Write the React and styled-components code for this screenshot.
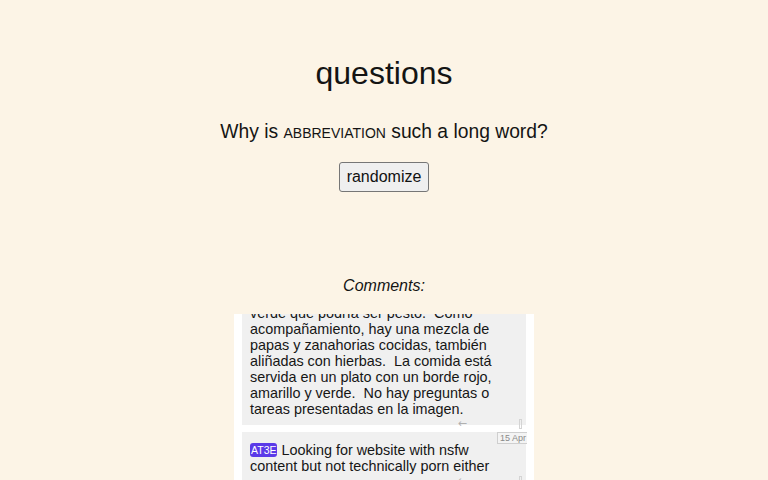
import React, { useLayoutEffect, useRef } from 'react';
import styled, { createGlobalStyle } from 'styled-components';

const GlobalStyle = createGlobalStyle`
  html, body {
    margin: 0;
    padding: 0;
    background: #fcf4e6;
    overflow: hidden;
  }
  * {
    box-sizing: border-box;
  }
  body {
    font-family: 'Liberation Sans', Arial, sans-serif;
    color: #141414;
  }
`;

const Page = styled.div`
  display: flex;
  flex-direction: column;
  align-items: center;
  padding-top: 55px;
  height: 480px;
`;

const Title = styled.h1`
  margin: 0;
  font-size: 32px;
  line-height: 37px;
  font-weight: normal;
`;

const Question = styled.h2`
  margin: 29px 0 0;
  font-size: 19.3px;
  line-height: 22px;
  font-weight: normal;
`;

const Abbr = styled.span`
  font-variant: small-caps;
  text-transform: lowercase;
`;

const RandomButton = styled.button`
  margin-top: 19px;
  height: 30px;
  padding: 0 7px;
  font-family: 'Liberation Sans', Arial, sans-serif;
  font-size: 16px;
  color: #111;
  background: #efefef;
  border: 1px solid #767676;
  border-radius: 3px;
`;

const CommentsLabel = styled.h3`
  margin: 85px 0 0;
  font-size: 16px;
  line-height: 18.5px;
  font-weight: normal;
  font-style: italic;
`;

const Panel = styled.div`
  margin-top: 18px;
  width: 300px;
  flex: 1;
  display: flex;
  flex-direction: column;
  gap: 7px;
  background: #fff;
  padding: 8px 8px 0;
  overflow-y: scroll;
  scrollbar-width: none;
  &::-webkit-scrollbar {
    display: none;
  }
`;

const Card = styled.div`
  position: relative;
  flex-shrink: 0;
  background: #f0f0f0;
  padding: ${p => (p.dated ? '10px' : '8px')} 8px 0;
`;

const Body = styled.div`
  font-size: 14.4px;
  line-height: 16px;
  white-space: pre-wrap;
  color: #161616;
`;

const Badge = styled.span`
  display: inline-block;
  background: #5a3ae8;
  color: #fff;
  font-size: 10.5px;
  line-height: 14px;
  padding: 0 1px;
  border-radius: 3px;
  vertical-align: 1px;
`;

const DateTag = styled.span`
  position: absolute;
  top: 0;
  right: -1px;
  font-size: 9px;
  line-height: 10px;
  padding: 0 1px 0 2px;
  color: #8a8a8a;
  border: 1px solid #cfcfcf;
  border-right: none;
  background: #f4f4f4;
`;

const Footer = styled.div`
  display: flex;
  justify-content: flex-end;
  align-items: flex-end;
  gap: 52px;
  height: 8px;
  margin-right: -4px;
  color: #b0b0b0;
`;

const Reply = styled.span`
  font-family: 'DejaVu Sans', sans-serif;
  font-size: 11px;
  line-height: 8px;
  margin-bottom: -3px;
`;

const Tick = styled.span`
  width: 3px;
  height: 10px;
  border: 1px solid #d4d4d4;
  margin-bottom: -4px;
`;

export default function App() {
  const panelRef = useRef(null);
  const markRef = useRef(null);

  useLayoutEffect(() => {
    const panel = panelRef.current;
    const mark = markRef.current;
    if (!panel || !mark) return;
    const diff = mark.getBoundingClientRect().top - panel.getBoundingClientRect().top;
    panel.scrollTop = panel.scrollTop + diff + 9;
  }, []);

  return (
    <>
      <GlobalStyle />
      <Page>
        <Title>questions</Title>
        <Question>
          Why is <Abbr>ABBREVIATION</Abbr> such a long word?
        </Question>
        <RandomButton>randomize</RandomButton>
        <CommentsLabel>Comments:</CommentsLabel>
        <Panel ref={panelRef}>
          <Card>
            <Body>
              {'La imagen muestra un plato de comida.  En el centro hay un trozo de pollo asado cubierto con una salsa\n'}
              <span ref={markRef}>verde</span>
              {' que podría ser pesto.  Como acompañamiento, hay una mezcla de papas y zanahorias cocidas, también aliñadas con hierbas.  La comida está servida en un plato con un borde rojo, amarillo y verde.  No hay preguntas o tareas presentadas en la imagen.'}
            </Body>
            <Footer>
              <Reply>←</Reply>
              <Tick />
            </Footer>
          </Card>
          <Card dated>
            <DateTag>15 Apr</DateTag>
            <Body>
              <Badge>AT3E</Badge> Looking for website with nsfw content but not technically porn either
            </Body>
            <Footer>
              <Reply>←</Reply>
              <Tick />
            </Footer>
          </Card>
        </Panel>
      </Page>
    </>
  );
}
